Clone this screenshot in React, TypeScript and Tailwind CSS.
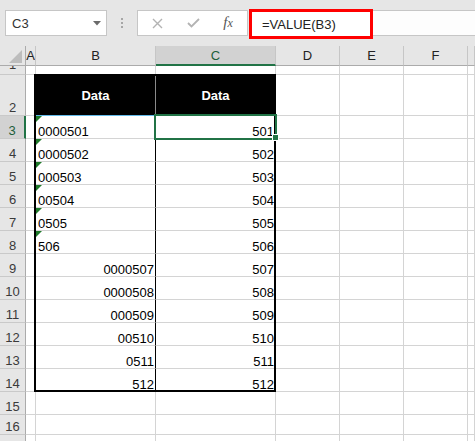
import React from "react";

type Cell = { text?: string; align?: "left" | "right"; tri?: boolean };

const colB: Record<number, Cell> = {
  3: { text: "0000501", align: "left", tri: true },
  4: { text: "0000502", align: "left", tri: true },
  5: { text: "000503", align: "left", tri: true },
  6: { text: "00504", align: "left", tri: true },
  7: { text: "0505", align: "left", tri: true },
  8: { text: "506", align: "left", tri: true },
  9: { text: "0000507", align: "right" },
  10: { text: "0000508", align: "right" },
  11: { text: "000509", align: "right" },
  12: { text: "00510", align: "right" },
  13: { text: "0511", align: "right" },
  14: { text: "512", align: "right" },
};

const rows = Array.from({ length: 17 }, (_, i) => i + 1);

function CellText({ c }: { c?: Cell }) {
  if (!c || !c.text) return null;
  return <span className="whitespace-nowrap">{c.text}</span>;
}

function Triangle() {
  return (
    <svg className="absolute left-0 top-0" width="6" height="6" viewBox="0 0 6 6">
      <polygon points="0,0 6,0 0,6" fill="#1f7a2a" />
    </svg>
  );
}

function RowHeader({ r }: { r: number }) {
  if (r === 1) {
    return (
      <div className="flex justify-center overflow-hidden border-r border-b border-r-[#ababab] border-b-[#c9c9c9] bg-[#e6e6e6] text-[#3a3a3a]">
        <span className="mt-[-8px] leading-[13px]">1</span>
      </div>
    );
  }
  if (r === 3) {
    return (
      <div className="flex items-end justify-center overflow-hidden border-r-2 border-b border-r-[#217346] border-b-[#c9c9c9] bg-[#d2d2d2] pb-[1px] text-[#1d5e3a]">
        <span className="leading-[13px]">3</span>
      </div>
    );
  }
  return (
    <div className="flex items-end justify-center overflow-hidden border-r border-b border-r-[#ababab] border-b-[#c9c9c9] bg-[#e6e6e6] pb-[1px] text-[#3a3a3a]">
      <span className="leading-[13px]">{r <= 16 ? r : ""}</span>
    </div>
  );
}

function Row({ r }: { r: number }) {
  const inTable = r >= 3 && r <= 14;
  const b = colB[r];
  const cVal = inTable ? String(498 + r) : undefined;

  let bCell: React.ReactNode;
  let cCell: React.ReactNode;

  if (r === 2) {
    bCell = (
      <div className="flex items-center justify-center border-r border-b border-r-[#8a8a8a] border-b-[#62b9e8] bg-black font-bold text-white">
        <span className="leading-[13px]">Data</span>
      </div>
    );
    cCell = (
      <div className="flex items-center justify-center border-r border-b border-r-black border-b-[#d4d4d4] bg-black font-bold text-white">
        <span className="leading-[13px]">Data</span>
      </div>
    );
  } else if (r === 1) {
    bCell = <div className="border-r border-b border-r-[#d4d4d4] border-b-black bg-white" />;
    cCell = <div className="border-r border-b border-r-[#d4d4d4] border-b-black bg-white" />;
  } else if (inTable) {
    bCell = (
      <div
        className={
          b && b.align === "left"
            ? "relative flex items-end justify-start overflow-hidden border-r border-b border-r-black border-b-[#d4d4d4] bg-white pl-[2px]"
            : "relative flex items-end justify-end overflow-hidden border-r border-b border-r-black border-b-[#d4d4d4] bg-white pr-[1px]"
        }
      >
        {b && b.tri ? <Triangle /> : null}
        <span className="leading-[13px]">
          <CellText c={b} />
        </span>
      </div>
    );
    cCell = (
      <div className="flex items-end justify-end overflow-hidden border-r border-b border-r-[#d4d4d4] border-b-[#d4d4d4] bg-white pr-[1px]">
        <span className="leading-[13px]">{cVal}</span>
      </div>
    );
  } else {
    bCell = <div className="border-r border-b border-[#d4d4d4] bg-white" />;
    cCell = <div className="border-r border-b border-[#d4d4d4] bg-white" />;
  }

  return (
    <>
      <RowHeader r={r} />
      <div className="border-r border-b border-[#d4d4d4] bg-white" />
      {bCell}
      {cCell}
      <div className="border-r border-b border-[#d4d4d4] bg-white" />
      <div className="border-r border-b border-[#d4d4d4] bg-white" />
      <div className="border-r border-b border-[#d4d4d4] bg-white" />
      <div className="border-r border-b border-[#d4d4d4] bg-white" />
    </>
  );
}

function ColHeader({ label, active }: { label: string; active?: boolean }) {
  if (active) {
    return (
      <div className="flex items-center justify-center overflow-hidden border-r border-b-2 border-r-[#c6c6c6] border-b-[#217346] bg-[#d2d2d2] text-[#1d5e3a]">
        <span className="leading-[13px]">{label}</span>
      </div>
    );
  }
  return (
    <div className="flex items-center justify-center overflow-hidden border-r border-b border-r-[#c6c6c6] border-b-[#ababab] bg-[#e6e6e6] text-[#222]">
      <span className="leading-[13px]">{label}</span>
    </div>
  );
}

export default function App() {
  return (
    <div className="relative h-[441px] w-[475px] overflow-hidden bg-[#e6e6e6] font-['Liberation_Sans',Arial,sans-serif] text-[13px] text-black">
      {/* Formula bar */}
      <div className="relative flex h-[46px] items-start bg-[#e6e6e6] pt-[10px]">
        <div className="ml-[5px] flex h-[26px] w-[102px] items-center justify-between border border-[#c6c6c6] bg-white pl-[6px] pr-[5px] text-[#333]">
          <span className="leading-[13px]">C3</span>
          <svg width="8" height="5" viewBox="0 0 8 5">
            <polygon points="0,0 8,0 4,4.5" fill="#6b6b6b" />
          </svg>
        </div>
        <div className="flex h-[26px] w-[30px] flex-col items-center justify-center gap-[2px]">
          <span className="h-[2px] w-[2px] bg-[#a6a6a6]" />
          <span className="h-[2px] w-[2px] bg-[#a6a6a6]" />
          <span className="h-[2px] w-[2px] bg-[#a6a6a6]" />
        </div>
        <div className="flex h-[26px] w-[111px] items-center border border-[#c6c6c6] bg-white">
          <div className="flex w-[38px] justify-center">
            <svg width="11" height="11" viewBox="0 0 11 11">
              <path d="M1 1 L10 10 M10 1 L1 10" stroke="#b3b3b3" strokeWidth="1.4" fill="none" />
            </svg>
          </div>
          <div className="flex w-[34px] justify-center">
            <svg width="13" height="10" viewBox="0 0 13 10">
              <path d="M1 5 L4.5 8.5 L12 1" stroke="#b3b3b3" strokeWidth="1.8" fill="none" />
            </svg>
          </div>
          <div className="flex w-[36px] justify-center">
            <span className="font-['Liberation_Serif',serif] text-[15px] italic leading-[15px] text-[#555]">
              f<span className="text-[12px]">x</span>
            </span>
          </div>
        </div>
        <div className="ml-[1px] h-[26px] flex-1 border-y border-[#c6c6c6] bg-[#fdfdfd]" />
        <div className="absolute left-[249px] top-[9px] flex h-[30px] w-[124px] items-center border-[3px] border-[#ff0000] bg-white pl-[10px] text-[#222]">
          <span className="leading-[13px]">=VALUE(B3)</span>
        </div>
      </div>

      {/* Sheet grid */}
      <div className="relative">
        <div className="grid grid-cols-[26px_10px_120px_120px_64px_64px_64px_1fr] grid-rows-[20px_9px_41px_repeat(13,23px)_20px_23px]">
          <div className="relative border-r border-b border-[#ababab] bg-[#e6e6e6]">
            <svg className="absolute left-0 top-0" width="25" height="19" viewBox="0 0 25 19">
              <polygon points="22,4 22,17 9,17" fill="#bdbdbd" />
            </svg>
          </div>
          <ColHeader label="A" />
          <ColHeader label="B" />
          <ColHeader label="C" active />
          <ColHeader label="D" />
          <ColHeader label="E" />
          <ColHeader label="F" />
          <ColHeader label="" />
          {rows.map((r) => (
            <Row key={r} r={r} />
          ))}
        </div>

        {/* table outline */}
        <div className="pointer-events-none absolute left-[34px] top-[28px] h-[318px] w-[242px] border-2 border-black" />
        {/* selection */}
        <div className="pointer-events-none absolute left-[154px] top-[68px] h-[26px] w-[123px] border-2 border-[#217346]" />
        <div className="pointer-events-none absolute left-[272px] top-[88px] h-[7px] w-[7px] border border-white bg-[#217346]" />
      </div>
    </div>
  );
}
